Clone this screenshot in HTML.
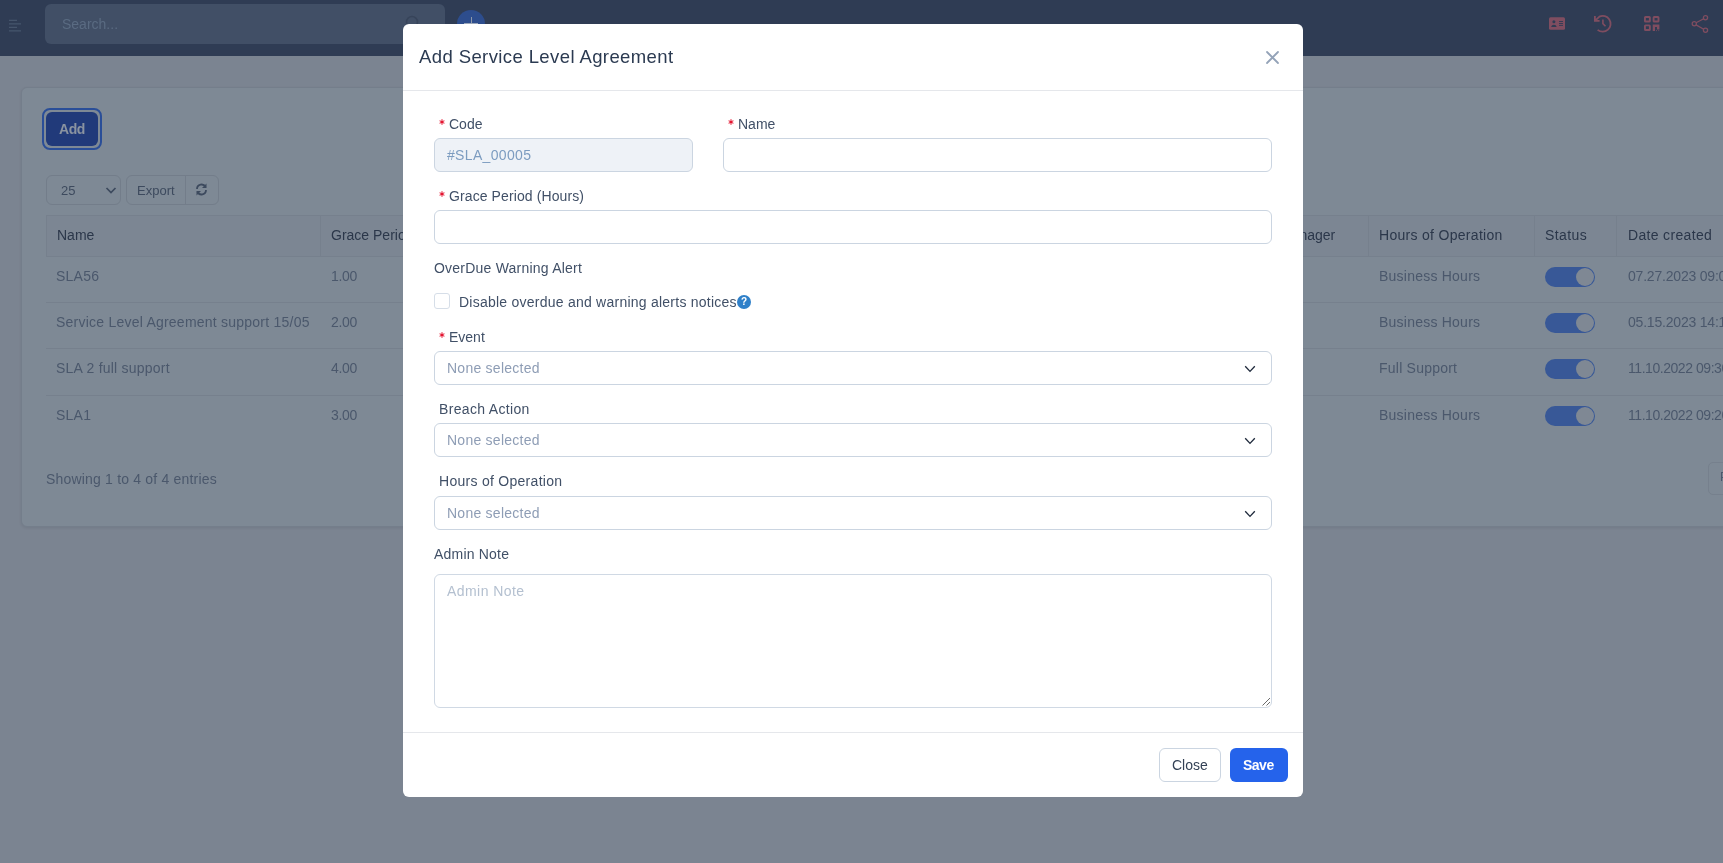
<!DOCTYPE html>
<html><head><meta charset="utf-8">
<style>
*{box-sizing:border-box;margin:0;padding:0}
html,body{width:1723px;height:863px;overflow:hidden;background:#7b8491;font-family:"Liberation Sans",sans-serif;position:relative}
.a{position:absolute}
.t{position:absolute;line-height:1;white-space:nowrap;will-change:transform}
/* header */
#hdr{left:0;top:0;width:1723px;height:56px;background:#2f3c54}
.hb{position:absolute;left:9px;height:1.3px;background:#4a5970}
#search{left:45px;top:4px;width:400px;height:40px;border-radius:6px;background:#414f66}
#card{left:21px;top:87px;width:1760px;height:440px;background:#7e8995;border:1px solid #747e8b;border-radius:6px;box-shadow:0 1px 3px rgba(0,0,0,0.08)}
.th{font-size:14px;color:#2b374a}
.td{font-size:14px;color:#4b586c;letter-spacing:0.23px}
.vl{position:absolute;width:1px;background:#76808d}
.hl{position:absolute;height:1px;background:#76808d}
.tog{position:absolute;width:50px;height:20px;border-radius:10px;background:#385897}
.tog:after{content:"";position:absolute;right:1px;top:1px;width:18px;height:18px;border-radius:50%;background:#7f8894}
/* modal */
#modal{left:403px;top:24px;width:900px;height:773px;background:#fff;border-radius:6px}
.lb{font-size:14px;color:#415067}
.req{font-size:14px;color:#e11d2a}
.inp{position:absolute;border:1px solid #cbd5e1;border-radius:6px;background:#fff}
.ph{font-size:14px;color:#8e9db5;letter-spacing:0.25px}
.chev{position:absolute;width:12px;height:8px}
</style></head>
<body>
<!-- HEADER -->
<div id="hdr" class="a">
  <svg class="a" style="left:0;top:0" width="30" height="40" viewBox="0 0 30 40"><g stroke="#46556c" stroke-width="1.3"><path d="M9 20.3 H17 M9 23.8 H21 M9 27.3 H17 M9 30.8 H21"/></g></svg>
  <div id="search" class="a"></div>
  <div class="t" style="left:62px;top:17px;font-size:14px;color:#5a6b82">Search...</div>
  <svg class="a" style="left:400px;top:14px" width="24" height="24" viewBox="0 0 24 24"><circle cx="12" cy="8" r="5.5" fill="none" stroke="#37445a" stroke-width="1.6"/></svg>
  <div class="a" style="left:457px;top:10px;width:28px;height:28px;border-radius:50%;background:#2d4d8d"></div>
  <div class="a" style="left:470.5px;top:17px;width:1px;height:14px;background:#8d98aa"></div>
  <div class="a" style="left:464px;top:23px;width:14px;height:1.5px;background:#9aa6b8"></div>
  <!-- right icons -->
  <svg class="a" style="left:1549px;top:17px" width="17" height="14" viewBox="0 0 17 14">
    <rect x="0" y="0.3" width="16" height="12.5" rx="1.5" fill="#7f4d60"/>
    <circle cx="4.9" cy="4.7" r="1.5" fill="#2f3c54"/>
    <path d="M2.1 10 Q2.6 7.8 4.9 7.8 Q7.2 7.8 7.7 10 Z" fill="#2f3c54"/>
    <rect x="10" y="4" width="4" height="0.9" fill="#2f3c54"/>
    <rect x="10" y="6" width="4" height="0.9" fill="#2f3c54"/>
    <rect x="10" y="7.9" width="4" height="0.9" fill="#2f3c54"/>
  </svg>
  <svg class="a" style="left:1593px;top:14px" width="20" height="20" viewBox="0 0 20 20">
    <path d="M4.62 15.85 A7.9 7.9 0 1 0 6.36 2.64 L1.9 6.8 M1.9 2.1 V6.8 H6.6" fill="none" stroke="#7f4d60" stroke-width="1.8" stroke-linejoin="miter"/>
    <path d="M9.9 5.6 V9.6 L12.5 12.3" fill="none" stroke="#7f4d60" stroke-width="1.6"/>
  </svg>
  <svg class="a" style="left:1644px;top:16px" width="17" height="16" viewBox="0 0 17 16">
    <g fill="none" stroke="#7f4d60" stroke-width="1.9">
      <rect x="0.95" y="0.95" width="4.9" height="4.6" rx="0.6"/><rect x="9.6" y="0.95" width="4.9" height="4.6" rx="0.6"/><rect x="0.95" y="9.4" width="4.9" height="4.6" rx="0.6"/>
    </g>
    <path d="M8.7 8.5 H15.4 V13.5 H13 V11 H11 V15 H8.7 Z" fill="#7f4d60"/>
    <rect x="12" y="14.2" width="0.9" height="0.9" fill="#7f4d60"/><rect x="14.3" y="14.2" width="0.9" height="0.9" fill="#7f4d60"/>
  </svg>
  <svg class="a" style="left:1691px;top:14px" width="19" height="20" viewBox="0 0 19 20">
    <g fill="none" stroke="#7f4d60" stroke-width="1.3">
      <circle cx="14.5" cy="3.7" r="2.1"/><circle cx="3.3" cy="9.8" r="2.1"/><circle cx="14.5" cy="16.3" r="2.1"/>
      <path d="M5.1 8.8 L12.7 4.7 M5.1 10.9 L12.7 15.2"/>
    </g>
  </svg>
</div>

<!-- CARD -->
<div id="card" class="a"></div>
<div class="a" style="left:42px;top:108px;width:60px;height:42px;border-radius:8px;border:2px solid #2a4e98"></div>
<div class="a" style="left:46px;top:112px;width:52px;height:34px;border-radius:6px;background:#213a7a"></div>
<div class="t" style="left:59px;top:122px;font-size:14px;letter-spacing:-0.4px;color:#8a93a0;font-weight:bold">Add</div>

<div class="a" style="left:46px;top:175px;width:75px;height:30px;border:1px solid #737d8a;border-radius:6px"></div>
<div class="t" style="left:61px;top:184px;font-size:13px;color:#3d4a5e">25</div>
<svg class="a" style="left:105px;top:186px" width="12" height="9" viewBox="0 0 12 9"><path d="M1.5 2 L6 6.5 L10.5 2" fill="none" stroke="#3d4a5e" stroke-width="1.7"/></svg>
<div class="a" style="left:126px;top:175px;width:93px;height:30px;border:1px solid #737d8a;border-radius:6px"></div>
<div class="vl" style="left:185px;top:175px;height:30px;background:#737d8a"></div>
<div class="t" style="left:137px;top:184px;font-size:13px;color:#3d4a5e">Export</div>
<svg class="a" style="left:195px;top:183px" width="13" height="13" viewBox="0 0 13 13">
  <g fill="none" stroke="#3d4a5e" stroke-width="1.8"><path d="M2 6 A4.5 4.5 0 0 1 10.5 4"/><path d="M11 7 A4.5 4.5 0 0 1 2.5 9"/></g>
  <path d="M11.5 0.5 V5 H7 Z" fill="#3d4a5e"/><path d="M1.5 12.5 V8 H6 Z" fill="#3d4a5e"/>
</svg>

<!-- table -->
<div class="a" style="left:46px;top:215px;width:1700px;height:41px;background:#7c8693"></div>
<div class="hl" style="left:46px;top:215px;width:1700px"></div>
<div class="hl" style="left:46px;top:256px;width:1700px"></div>
<div class="vl" style="left:46px;top:215px;height:41px"></div>
<div class="vl" style="left:320px;top:215px;height:41px"></div>
<div class="vl" style="left:1368px;top:215px;height:41px"></div>
<div class="vl" style="left:1534px;top:215px;height:41px"></div>
<div class="vl" style="left:1616px;top:215px;height:41px"></div>
<div class="t th" style="left:57px;top:228px">Name</div>
<div class="t th" style="left:331px;top:228px">Grace Period (Hours)</div>
<div class="t th" style="left:1280px;top:228px">Manager</div>
<div class="t th" style="left:1379px;top:228px;letter-spacing:0.3px">Hours of Operation</div>
<div class="t th" style="left:1545px;top:228px;letter-spacing:0.4px">Status</div>
<div class="t th" style="left:1628px;top:228px;letter-spacing:0.33px">Date created</div>

<div class="hl" style="left:46px;top:302px;width:1700px"></div>
<div class="hl" style="left:46px;top:348px;width:1700px"></div>
<div class="hl" style="left:46px;top:395px;width:1700px"></div>

<div class="t td" style="left:56px;top:269px">SLA56</div>
<div class="t td" style="left:331px;top:269px;letter-spacing:-0.3px">1.00</div>
<div class="t td" style="left:1379px;top:269px">Business Hours</div>
<div class="tog" style="left:1545px;top:267px"></div>
<div class="t td" style="left:1628px;top:269px;letter-spacing:-0.2px">07.27.2023 09:00</div>

<div class="t td" style="left:56px;top:315px">Service Level Agreement support 15/05</div>
<div class="t td" style="left:331px;top:315px;letter-spacing:-0.3px">2.00</div>
<div class="t td" style="left:1379px;top:315px">Business Hours</div>
<div class="tog" style="left:1545px;top:313px"></div>
<div class="t td" style="left:1628px;top:315px;letter-spacing:-0.2px">05.15.2023 14:10</div>

<div class="t td" style="left:56px;top:361px">SLA 2 full support</div>
<div class="t td" style="left:331px;top:361px;letter-spacing:-0.3px">4.00</div>
<div class="t td" style="left:1379px;top:361px">Full Support</div>
<div class="tog" style="left:1545px;top:359px"></div>
<div class="t td" style="left:1628px;top:361px;letter-spacing:-0.45px">11.10.2022 09:30</div>

<div class="t td" style="left:56px;top:408px">SLA1</div>
<div class="t td" style="left:331px;top:408px;letter-spacing:-0.3px">3.00</div>
<div class="t td" style="left:1379px;top:408px">Business Hours</div>
<div class="tog" style="left:1545px;top:406px"></div>
<div class="t td" style="left:1628px;top:408px;letter-spacing:-0.45px">11.10.2022 09:20</div>

<div class="t td" style="left:46px;top:472px;letter-spacing:0.19px">Showing 1 to 4 of 4 entries</div>
<div class="a" style="left:1708px;top:462px;width:40px;height:33px;border:1px solid #76808d;border-radius:5px"></div>
<div class="t" style="left:1720px;top:471px;font-size:12px;color:#4b586c">Previous</div>

<!-- MODAL -->
<div id="modal" class="a"></div>
<div class="t" style="left:419px;top:47.5px;font-size:18.5px;letter-spacing:0.4px;color:#2b3a51">Add Service Level Agreement</div>
<svg class="a" style="left:1264px;top:49px" width="17" height="17" viewBox="0 0 17 17"><path d="M3 3 L14 14 M14 3 L3 14" stroke="#94a3b8" stroke-width="1.8" stroke-linecap="round"/></svg>
<div class="hl" style="left:403px;top:90px;width:900px;background:#e5e7eb"></div>

<svg class="a" style="left:437.6px;top:118.3px" width="8" height="8" viewBox="0 0 8 8"><path d="M4 1.2 V6.8 M1.6 2.6 L6.4 5.4 M6.4 2.6 L1.6 5.4" stroke="#e3132f" stroke-width="1.05"/></svg>
<div class="t lb" style="left:449px;top:117px">Code</div>
<div class="inp" style="left:434px;top:138px;width:259px;height:34px;background:#eef2f7"></div>
<div class="t" style="left:447px;top:148px;font-size:14px;letter-spacing:0.33px;color:#7c9cc0">#SLA_00005</div>

<svg class="a" style="left:727.0px;top:118.3px" width="8" height="8" viewBox="0 0 8 8"><path d="M4 1.2 V6.8 M1.6 2.6 L6.4 5.4 M6.4 2.6 L1.6 5.4" stroke="#e3132f" stroke-width="1.05"/></svg>
<div class="t lb" style="left:738px;top:117px">Name</div>
<div class="inp" style="left:723px;top:138px;width:549px;height:34px"></div>

<svg class="a" style="left:437.6px;top:190.3px" width="8" height="8" viewBox="0 0 8 8"><path d="M4 1.2 V6.8 M1.6 2.6 L6.4 5.4 M6.4 2.6 L1.6 5.4" stroke="#e3132f" stroke-width="1.05"/></svg>
<div class="t lb" style="left:449px;top:189px;letter-spacing:0.1px">Grace Period (Hours)</div>
<div class="inp" style="left:434px;top:210px;width:838px;height:34px"></div>

<div class="t lb" style="left:434px;top:261px;letter-spacing:0.22px">OverDue Warning Alert</div>
<div class="a" style="left:434px;top:293px;width:16px;height:16px;border:1px solid #d6dee8;border-radius:3px"></div>
<div class="t lb" style="left:459px;top:295px;letter-spacing:0.24px">Disable overdue and warning alerts notices</div>
<div class="a" style="left:737px;top:295px;width:14px;height:14px;border-radius:50%;background:#2f80c9"></div>
<div class="t" style="left:740.5px;top:297px;font-size:10px;font-weight:bold;color:#fff">?</div>

<svg class="a" style="left:437.6px;top:331.3px" width="8" height="8" viewBox="0 0 8 8"><path d="M4 1.2 V6.8 M1.6 2.6 L6.4 5.4 M6.4 2.6 L1.6 5.4" stroke="#e3132f" stroke-width="1.05"/></svg>
<div class="t lb" style="left:449px;top:330px">Event</div>
<div class="inp" style="left:434px;top:351px;width:838px;height:34px"></div>
<div class="t ph" style="left:447px;top:361px">None selected</div>
<svg class="chev" style="left:1243.5px;top:365px" viewBox="0 0 12 8"><path d="M1.2 1.2 L6 6.4 L10.8 1.2" fill="none" stroke="#1e293b" stroke-width="1.3"/></svg>

<div class="t lb" style="left:439px;top:402px;letter-spacing:0.33px">Breach Action</div>
<div class="inp" style="left:434px;top:423px;width:838px;height:34px"></div>
<div class="t ph" style="left:447px;top:433px">None selected</div>
<svg class="chev" style="left:1243.5px;top:437px" viewBox="0 0 12 8"><path d="M1.2 1.2 L6 6.4 L10.8 1.2" fill="none" stroke="#1e293b" stroke-width="1.3"/></svg>

<div class="t lb" style="left:439px;top:474px;letter-spacing:0.28px">Hours of Operation</div>
<div class="inp" style="left:434px;top:496px;width:838px;height:34px"></div>
<div class="t ph" style="left:447px;top:506px">None selected</div>
<svg class="chev" style="left:1243.5px;top:510px" viewBox="0 0 12 8"><path d="M1.2 1.2 L6 6.4 L10.8 1.2" fill="none" stroke="#1e293b" stroke-width="1.3"/></svg>

<div class="t lb" style="left:434px;top:547px;letter-spacing:0.2px">Admin Note</div>
<div class="inp" style="left:434px;top:574px;width:838px;height:134px;border-color:#d0d9e4"></div>
<div class="t" style="left:447px;top:584px;font-size:14px;letter-spacing:0.44px;color:#b4c0d0">Admin Note</div>
<svg class="a" style="left:1259px;top:695px" width="12" height="12" viewBox="0 0 12 12"><path d="M3.5 10.5 L11 3 M7.5 10.5 L11 7" stroke="#6b6b6b" stroke-width="1"/></svg>

<div class="hl" style="left:403px;top:732px;width:900px;background:#e5e7eb"></div>
<div class="a" style="left:1159px;top:748px;width:62px;height:34px;border:1px solid #cbd5e1;border-radius:6px;background:#fff"></div>
<div class="t" style="left:1172px;top:758px;font-size:14px;color:#334155">Close</div>
<div class="a" style="left:1230px;top:748px;width:58px;height:34px;border-radius:6px;background:#2563eb"></div>
<div class="t" style="left:1243px;top:758px;font-size:14px;letter-spacing:-0.5px;color:#fff;font-weight:bold">Save</div>
</body></html>
